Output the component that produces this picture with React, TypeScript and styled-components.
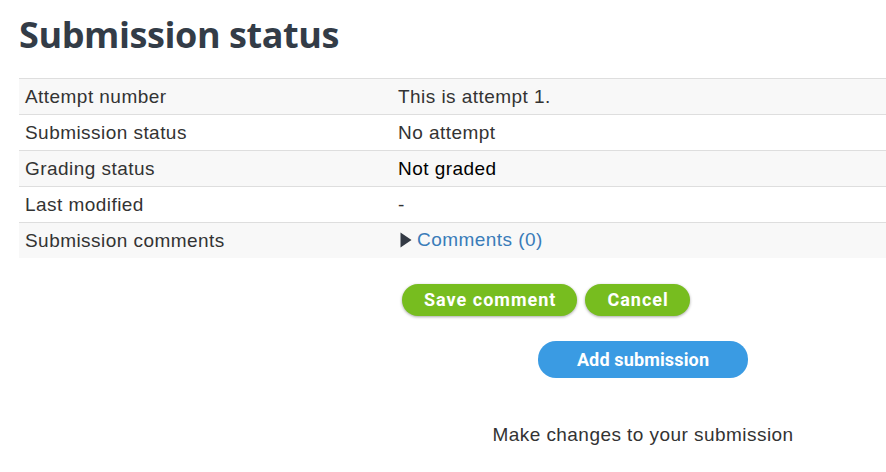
import React from "react";
import styled, { createGlobalStyle } from "styled-components";

const Global = createGlobalStyle`
  html, body { margin: 0; padding: 0; background: #fff; overflow: hidden; }
  body { font-family: "Liberation Sans", Arial, sans-serif; color: #333; }
`;

const Page = styled.div`
  width: 886px;
  height: 472px;
  padding-left: 19px;
  box-sizing: border-box;
  overflow: hidden;
`;

const Title = styled.h2`
  margin: 13px 0 0 0;
  font-family: "Open Sans", sans-serif;
  font-weight: 700;
  font-size: 36px;
  line-height: 43px;
  color: #333c47;
  letter-spacing: -0.42px;
`;

const Table = styled.table`
  margin-top: 22px;
  width: 875px;
  border-collapse: collapse;
  table-layout: fixed;
  font-size: 19px;
  letter-spacing: 0.45px;
`;

const Row = styled.tr<{ $striped: boolean }>`
  background: ${(p) => (p.$striped ? "#f8f8f8" : "#fff")};
  border-top: 1px solid #dedede;
`;

const Cell = styled.td<{ $dark?: boolean }>`
  height: 35px;
  padding: 0 6px;
  vertical-align: middle;
  color: ${(p) => (p.$dark ? "#000" : "#333")};
  line-height: 20px;
`;

const Toggle = styled.span`
  display: inline-flex;
  align-items: center;
  gap: 5px;
  color: #3a7cb9;
  margin-left: 2px;
`;

const Actions = styled.div`
  display: flex;
  gap: 8px;
  margin-top: 26px;
  padding-left: 383px;
`;

const Pill = styled.button<{ $tone: "green" | "blue" }>`
  border: none;
  border-radius: 18px;
  font-family: Roboto, "Liberation Sans", sans-serif;
  font-weight: 700;
  font-size: 18px;
  color: #fff;
  cursor: pointer;
  background: ${(p) => (p.$tone === "green" ? "#77bd1f" : "#3a9be3")};
  box-shadow: ${(p) =>
    p.$tone === "green" ? "0 1px 3px rgba(0,0,0,0.35)" : "none"};
  height: ${(p) => (p.$tone === "green" ? "32px" : "37px")};
  padding: 0 21px 0 22px;
  letter-spacing: ${(p) => (p.$tone === "green" ? "1px" : "0.15px")};
  line-height: 1;
`;

const Submission = styled.div`
  margin-left: 373px;
  width: 502px;
  display: flex;
  flex-direction: column;
  align-items: center;
  padding-top: 25px;
`;

const AddButton = styled(Pill)`
  width: 210px;
  padding: 0;
`;

const Note = styled.p`
  margin: 43px 0 0 0;
  font-size: 19px;
  line-height: 27px;
  letter-spacing: 0.45px;
  color: #333;
`;

const rows: { label: string; value: React.ReactNode; dark?: boolean }[] = [
  { label: "Attempt number", value: "This is attempt 1." },
  { label: "Submission status", value: "No attempt" },
  { label: "Grading status", value: "Not graded", dark: true },
  { label: "Last modified", value: "-" },
  {
    label: "Submission comments",
    value: (
      <Toggle>
        <svg width="12" height="16" viewBox="0 0 12 16">
          <path d="M0.5 0.5 L11.5 8 L0.5 15.5 Z" fill="#333a44" />
        </svg>
        Comments (0)
      </Toggle>
    ),
  },
];

export default function App() {
  return (
    <Page>
      <Global />
      <Title>Submission status</Title>
      <Table>
        <colgroup>
          <col style={{ width: 373 }} />
          <col />
        </colgroup>
        <tbody>
          {rows.map((r, i) => (
            <Row key={r.label} $striped={i % 2 === 0}>
              <Cell>{r.label}</Cell>
              <Cell $dark={r.dark}>{r.value}</Cell>
            </Row>
          ))}
        </tbody>
      </Table>
      <Actions>
        <Pill $tone="green">Save comment</Pill>
        <Pill $tone="green">Cancel</Pill>
      </Actions>
      <Submission>
        <AddButton $tone="blue">Add submission</AddButton>
        <Note>Make changes to your submission</Note>
      </Submission>
    </Page>
  );
}
